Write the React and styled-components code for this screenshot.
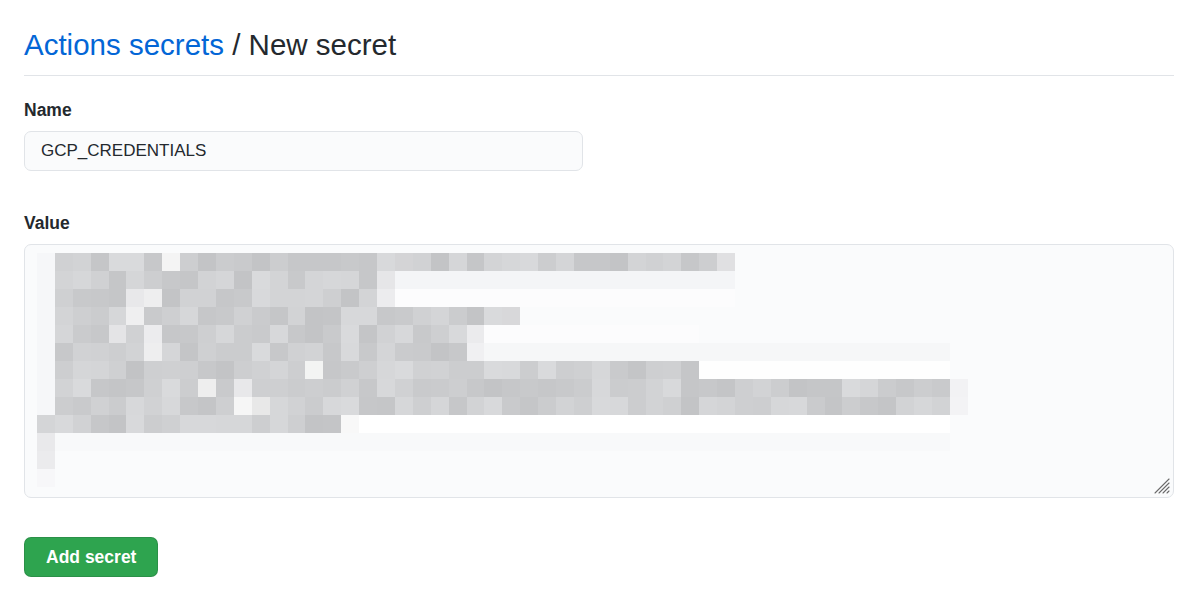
import { useMemo } from 'react';
import styled, { createGlobalStyle } from 'styled-components';

/* ─── Base ── */
const GlobalStyle = createGlobalStyle`
  html, body { margin:0; padding:0; background:#fff; }
  body { font-family:"Liberation Sans", Arial, sans-serif; color:#24292e; }
  * { box-sizing:border-box; }
`;

const Page = styled.main`padding:26px 26px 0 24px;`;

/* ─── Subhead ── */
const Subhead = styled.div`
  padding-bottom:12px; margin-bottom:22px;
  border-bottom:1px solid #e1e4e8;
`;
const Heading = styled.h2`
  margin:0; font-size:29.5px; line-height:37px; font-weight:400; color:#24292e;
`;
const Crumb = styled.a`color:#0366d6; text-decoration:none;`;

/* ─── Form ── */
const FormGroup = styled.div`margin-bottom:${p => p.$gap || 0}px;`;
const Label = styled.label`
  display:block; font-size:17.5px; line-height:25px; font-weight:700;
  margin-bottom:8px; color:#24292e;
`;
const Input = styled.input`
  display:block; width:559px; height:40px; padding:0 16px;
  font-family:inherit; font-size:17px; color:#24292e;
  background:#fafbfc; border:1px solid #e1e4e8; border-radius:7px;
  outline:none;
`;
const ValueBox = styled.div`
  position:relative; width:1150px; height:254px; padding:8px 12px;
  background:#fafbfc; border:1px solid #e1e4e8; border-radius:7px;
  overflow:hidden;
`;
const Grip = styled.svg`position:absolute; right:2px; bottom:2px;`;
const SubmitBtn = styled.button`
  display:inline-flex; align-items:center; height:40px; padding:0 21px;
  font-family:inherit; font-size:17.5px; font-weight:700; color:#fff;
  background:#2ea44f; border:1px solid rgba(27,31,35,0.15); border-radius:7px;
  cursor:pointer;
`;

/* ─── Blurred value (pixelated mosaic) ── */
const CELL_W = 17.9;
const CELL_H = 18;
const COLS = 52;
const ROWS = 13;

// [row, fromCol, toCol, colour | 'g' for random grey]
const SEGMENTS = [
  [0, 0, 0, '#f6f7f9'], [0, 1, 37, 'g'], [0, 38, 38, '#e0e0e2'],
  [1, 0, 0, '#f6f7f9'], [1, 1, 18, 'g'], [1, 19, 19, '#e6e6e8'], [1, 20, 38, '#f4f5f7'],
  [2, 0, 0, '#f6f7f9'], [2, 1, 18, 'g'], [2, 19, 19, '#ececee'], [2, 20, 38, '#fcfcfd'],
  [3, 0, 0, '#f6f7f9'], [3, 1, 25, 'g'], [3, 26, 26, '#d8d8da'],
  [4, 0, 0, '#f6f7f9'], [4, 1, 23, 'g'], [4, 24, 24, '#ebebed'], [4, 25, 36, '#fcfcfd'],
  [5, 0, 0, '#f6f7f9'], [5, 1, 23, 'g'], [5, 24, 24, '#f0f0f2'], [5, 25, 50, '#f6f7f8'],
  [6, 0, 0, '#f6f7f9'], [6, 1, 36, 'g'], [6, 37, 50, '#fefefe'],
  [7, 0, 0, '#f6f7f9'], [7, 1, 50, 'g'], [7, 51, 51, '#f2f2f4'],
  [8, 0, 0, '#f6f7f9'], [8, 1, 50, 'g'], [8, 51, 51, '#f3f3f5'],
  [9, 0, 16, 'g'], [9, 17, 17, '#f8f8f8'], [9, 18, 50, '#ffffff'],
  [10, 0, 0, '#e9e9eb'], [10, 1, 50, '#f8f9fa'],
  [11, 0, 0, '#ebebed'],
  [12, 0, 0, '#f7f7f9'],
];

const LIGHT = {
  '0-7': '#f4f4f4', '2-5': '#e8e8ea', '2-6': '#eeeeef', '3-5': '#efeff0',
  '4-4': '#e4e4e6', '4-6': '#ececee', '5-6': '#eeeeef', '6-15': '#f3f4f3',
  '7-9': '#eeeeee', '7-11': '#e8e8ea', '8-11': '#f6f6f6', '8-12': '#e8e8e8',
  '0-20': '#d4d4d6', '6-5': '#c2c3c5', '7-4': '#c4c5c7',
};

const shade = (r, c) => {
  let h = Math.imul(r + 11, 73856093) ^ Math.imul(c + 7, 19349663);
  h = Math.imul(h ^ (h >>> 13), 1274126177);
  h ^= h >>> 16;
  const v = 195 + (Math.abs(h) % 23);
  return `rgb(${v},${v + 1},${v + 3})`;
};

const Mosaic = () => {
  const cells = useMemo(() => {
    const out = [];
    SEGMENTS.forEach(([r, from, to, col]) => {
      for (let c = from; c <= to; c++) {
        const fill = col === 'g' ? (LIGHT[`${r}-${c}`] || shade(r, c)) : col;
        out.push(<rect key={`${r}-${c}`} x={c} y={r} width={1} height={1} fill={fill} />);
      }
    });
    return out;
  }, []);

  return (
    <svg width={COLS * CELL_W} height={ROWS * CELL_H} viewBox={`0 0 ${COLS} ${ROWS}`}
      preserveAspectRatio="none" shapeRendering="crispEdges" style={{ display:'block' }}>
      {cells}
    </svg>
  );
};

export default function App() {
  return (
    <Page>
      <GlobalStyle />

      <Subhead>
        <Heading><Crumb href="#">Actions secrets</Crumb> / New secret</Heading>
      </Subhead>

      <FormGroup $gap={40}>
        <Label htmlFor="secret-name">Name</Label>
        <Input id="secret-name" defaultValue="GCP_CREDENTIALS" />
      </FormGroup>

      <FormGroup $gap={39}>
        <Label>Value</Label>
        <ValueBox role="textbox" aria-label="Value">
          <Mosaic />
          <Grip width="18" height="18" viewBox="0 0 18 18">
            <g stroke="#6a6a6a" strokeWidth="1.1" strokeLinecap="round">
              <line x1="2" y1="16" x2="16" y2="2" />
              <line x1="6" y1="16" x2="16" y2="6" />
              <line x1="10" y1="16" x2="16" y2="10" />
              <line x1="14" y1="16" x2="16" y2="14" />
            </g>
          </Grip>
        </ValueBox>
      </FormGroup>

      <SubmitBtn type="submit">Add secret</SubmitBtn>
    </Page>
  );
}
